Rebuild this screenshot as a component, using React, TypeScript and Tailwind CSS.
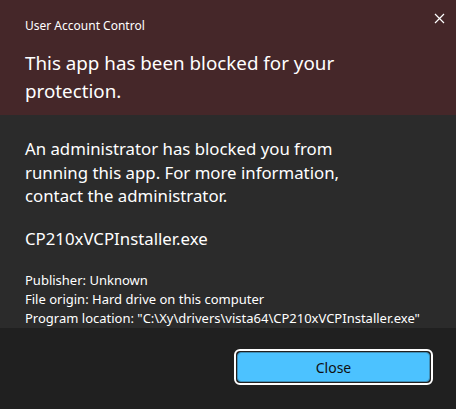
import React from "react";

const App: React.FC = () => {
  return (
    <div
      className="w-[456px] h-[409px] bg-[#202020] flex flex-col text-white overflow-hidden"
      style={{ fontFamily: '"Noto Sans", "Open Sans", sans-serif' }}
    >
      {/* header */}
      <div className="relative bg-[#452729] px-[25px] pt-[17px] pb-[10px]">
        <div className="text-[12px] leading-[18px]">User Account Control</div>
        <h1 className="mt-[14px] text-[18.8px] leading-[28px] max-w-[345px]">
          This app has been blocked for your protection.
        </h1>
        <button className="absolute top-[11px] right-[10px] w-[14px] h-[14px] flex items-center justify-center">
          <svg width="11" height="11" viewBox="0 0 11 11">
            <path d="M1 1 L10 10 M10 1 L1 10" stroke="#fff" strokeWidth="1.2" />
          </svg>
        </button>
      </div>

      {/* body */}
      <div className="bg-[#2b2b2b] h-[213px] px-[25px] pt-[22px]">
        <p className="text-[16.8px] leading-[23.5px] max-w-[345px]">
          An administrator has blocked you from running this app. For more
          information, contact the administrator.
        </p>
        <p className="mt-[19px] text-[16.8px] leading-[24px]">CP210xVCPInstaller.exe</p>
        <div className="mt-[20px] text-[13px] leading-[19px]">
          <div>Publisher: Unknown</div>
          <div>File origin: Hard drive on this computer</div>
          <div>Program location: "C:\Xy\drivers\vista64\CP210xVCPInstaller.exe"</div>
        </div>
      </div>

      {/* footer */}
      <div className="flex-1 flex justify-end items-start pt-[21px] pr-[23px]">
        <div className="rounded-[6px] border-2 border-white p-px">
          <button className="w-[193px] h-[30px] rounded-[4px] bg-[#4cc2ff] border border-[#3e8fb8] text-[#0f0f0f] text-[14px]">
            Close
          </button>
        </div>
      </div>
    </div>
  );
};

export default App;
